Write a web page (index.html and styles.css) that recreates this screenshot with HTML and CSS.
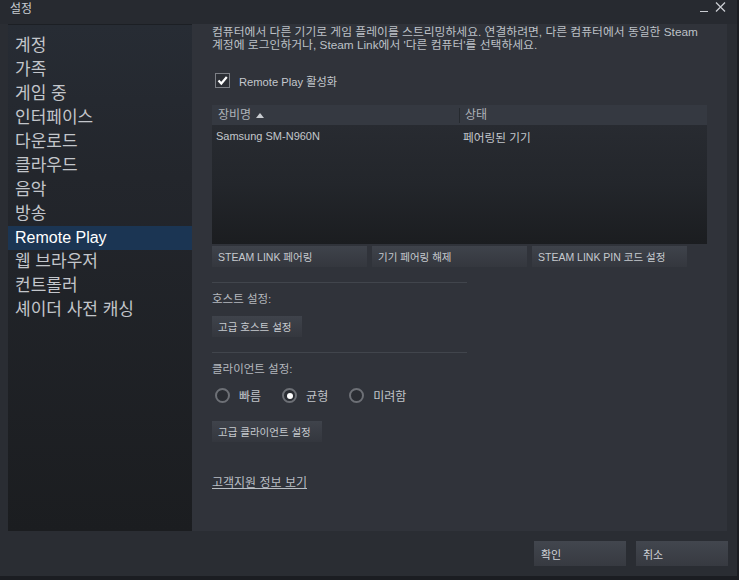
FILE: index.html
```html
<!DOCTYPE html>
<html lang="ko">
<head>
<meta charset="utf-8">
<title>설정</title>
<link rel="stylesheet" href="styles.css">
</head>
<body>
<div class="window">
  <div class="titlebar">
    <span class="title">설정</span>
    <div class="controls">
      <span class="min"></span>
      <svg class="close" width="11" height="10" viewBox="0 0 11 10"><path d="M1 0.5 L10 9.5 M10 0.5 L1 9.5" stroke="#c9ccd1" stroke-width="1.3" fill="none"/></svg>
    </div>
  </div>
  <div class="main">
    <nav class="sidebar">
      <div class="nav-item">계정</div>
      <div class="nav-item">가족</div>
      <div class="nav-item">게임 중</div>
      <div class="nav-item">인터페이스</div>
      <div class="nav-item">다운로드</div>
      <div class="nav-item">클라우드</div>
      <div class="nav-item">음악</div>
      <div class="nav-item">방송</div>
      <div class="nav-item latin active">Remote Play</div>
      <div class="nav-item">웹 브라우저</div>
      <div class="nav-item">컨트롤러</div>
      <div class="nav-item">셰이더 사전 캐싱</div>
    </nav>
    <section class="content">
      <p class="desc">컴퓨터에서 다른 기기로 게임 플레이를 스트리밍하세요. 연결하려면, 다른 컴퓨터에서 동일한 Steam<br>계정에 로그인하거나, Steam Link에서 '다른 컴퓨터'를 선택하세요.</p>
      <label class="check-row">
        <span class="checkbox"><svg width="13" height="13" viewBox="0 0 13 13"><path d="M2.5 6.5 L5.3 9.5 L10.8 3" stroke="#ffffff" stroke-width="2.2" fill="none"/></svg></span>
        <span class="check-label">Remote Play 활성화</span>
      </label>
      <div class="table">
        <div class="thead">
          <div class="th th-name">장비명<span class="sort"></span></div>
          <div class="th th-status">상태</div>
        </div>
        <div class="tbody">
          <div class="tr">
            <div class="td td-name">Samsung SM-N960N</div>
            <div class="td td-status">페어링된 기기</div>
          </div>
        </div>
      </div>
      <div class="btn-row">
        <button class="btn wide">STEAM LINK 페어링</button>
        <button class="btn wide">기기 페어링 해제</button>
        <button class="btn wide">STEAM LINK PIN 코드 설정</button>
      </div>
      <hr class="sep">
      <div class="label">호스트 설정:</div>
      <button class="btn single">고급 호스트 설정</button>
      <hr class="sep">
      <div class="label">클라이언트 설정:</div>
      <div class="radios">
        <span class="radio-item"><span class="radio"></span>빠름</span>
        <span class="radio-item"><span class="radio on"></span>균형</span>
        <span class="radio-item"><span class="radio"></span>미려함</span>
      </div>
      <button class="btn single client">고급 클라이언트 설정</button>
      <a class="link" href="#">고객지원 정보 보기</a>
    </section>
  </div>
  <div class="footer">
    <button class="fbtn">확인</button>
    <button class="fbtn">취소</button>
  </div>
</div>
</body>
</html>
```

FILE: styles.css
```css
* { box-sizing: border-box; }
html, body { margin: 0; padding: 0; }
body {
  width: 739px;
  height: 580px;
  background: #1b1d22;
  font-family: "Liberation Sans", "Noto Sans CJK KR", Arial, sans-serif;
  color: #b9bdc3;
  overflow: hidden;
}
.window {
  width: 737px;
  height: 576px;
  background: #2a2d33;
  display: flex;
  flex-direction: column;
}
.titlebar {
  height: 24px;
  display: flex;
  justify-content: space-between;
  align-items: flex-start;
  padding: 0 11px 0 10px;
  background: #272a30;
}
.title {
  font-size: 12px;
  line-height: 16px;
  color: #c8ccd1;
  margin-top: 1px;
}
.controls {
  display: flex;
  align-items: flex-start;
  gap: 7px;
  padding-top: 2px;
}
.min {
  width: 8px;
  height: 1px;
  background: #c9ccd1;
  margin-top: 9px;
}
.close { display: block; }
.main {
  height: 507px;
  display: flex;
  padding: 0 10px 0 8px;
}
.sidebar {
  width: 184px;
  background: linear-gradient(#272c34 0%, #23262c 30%, #1b1d20 100%);
  border-top: 1px solid #1c1f24;
  padding-top: 9px;
}
.nav-item {
  height: 24px;
  line-height: 24px;
  font-size: 17px;
  padding-left: 7px;
  color: #c3c6cb;
  white-space: nowrap;
}
.nav-item.latin { font-size: 16px; }
.nav-item.active {
  background: #1b3553;
  color: #ffffff;
}
.content {
  flex: 1;
  background: #30333a;
  padding: 2px 0 0 20px;
  display: flex;
  flex-direction: column;
  align-items: flex-start;
}
.desc {
  margin: 0;
  font-size: 11.8px;
  line-height: 13px;
  color: #bdc1c7;
  white-space: nowrap;
}
.check-row {
  margin-top: 21px;
  display: flex;
  align-items: center;
  height: 15px;
  padding-left: 3px;
}
.checkbox {
  width: 15px;
  height: 15px;
  border: 1px solid #7d8086;
  background: #2c2f35;
  display: flex;
  align-items: center;
  justify-content: center;
}
.check-label {
  margin-left: 9px;
  font-size: 11.2px;
  color: #c4c8cd;
}
.table {
  margin-top: 17px;
  width: 495px;
}
.thead {
  height: 20px;
  background: #353941;
  display: flex;
  align-items: center;
}
.th {
  font-size: 12px;
  color: #aeb2b8;
  line-height: 20px;
  display: flex;
  align-items: center;
}
.th-name {
  width: 248px;
  padding-left: 6px;
  border-right: 1px solid #262a2f;
  line-height: 15px;
}
.th-status { padding-left: 5px; }
.sort {
  width: 0;
  height: 0;
  margin-left: 5px;
  border-left: 4px solid transparent;
  border-right: 4px solid transparent;
  border-bottom: 5px solid #c9ccd1;
}
.tbody {
  height: 119px;
  background: linear-gradient(#282b31 0%, #23262b 50%, #1b1d20 100%);
}
.tr {
  display: flex;
  height: 22px;
  align-items: center;
}
.td { font-size: 11px; color: #c3c7cc; }
.td-name { width: 247px; padding-left: 4px; }
.td-status { padding-left: 4px; font-size: 11.7px; }
.btn-row {
  margin-top: 2px;
  display: flex;
  gap: 5px;
}
.btn {
  font-family: inherit;
  height: 21px;
  border: none;
  background: linear-gradient(#3f434b, #34373e);
  color: #c6cacf;
  font-size: 10.5px;
  text-align: left;
  padding: 0 6px;
  margin: 0;
  white-space: nowrap;
}
.btn.wide { width: 155px; }
.btn.single { margin-top: 10px; width: 90px; }
.btn.client { margin-top: 18px; width: 110px; }
.sep {
  margin: 15px 0 0 0;
  width: 255px;
  border: none;
  height: 1px;
  background: #41454c;
}
.label {
  margin-top: 9px;
  font-size: 11.5px;
  line-height: 14px;
  color: #b4b8be;
}
.radios {
  margin-top: 12px;
  display: flex;
  height: 15px;
  align-items: center;
  padding-left: 3px;
}
.radio-item {
  display: flex;
  align-items: center;
  font-size: 12px;
  color: #c1c5ca;
  margin-right: 21px;
}
.radio {
  width: 15px;
  height: 15px;
  border-radius: 50%;
  border: 2px solid #6d7076;
  background: #2a2d33;
  margin-right: 9px;
  display: flex;
  align-items: center;
  justify-content: center;
}
.radio.on::after {
  content: "";
  width: 6px;
  height: 6px;
  border-radius: 50%;
  background: #ffffff;
}
.link {
  margin-top: 34px;
  font-size: 12px;
  line-height: 14px;
  color: #b9bdc3;
  text-decoration: underline;
}
.footer {
  flex: 1;
  display: flex;
  justify-content: flex-end;
  gap: 10px;
  padding: 10px 9px 0 0;
}
.fbtn {
  font-family: inherit;
  width: 92px;
  height: 25px;
  border: none;
  background: linear-gradient(#42464e, #373a41);
  color: #d0d3d8;
  font-size: 11px;
  text-align: left;
  padding: 0 7px;
  margin: 0;
}
```
